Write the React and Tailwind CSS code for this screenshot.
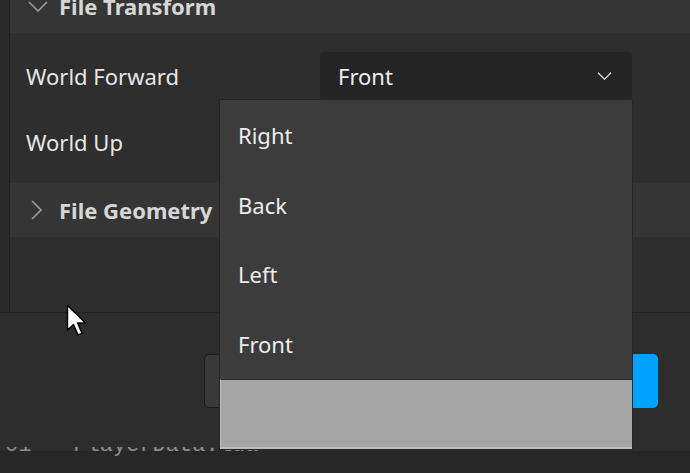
import React from "react";

const ChevronDown = ({ className = "" }) => (
  <svg viewBox="0 0 20 11" className={className} fill="none" stroke="currentColor" strokeWidth="1.6">
    <path d="M1 1l9 9 9-9" />
  </svg>
);

const ChevronRight = ({ className = "" }) => (
  <svg viewBox="0 0 11 20" className={className} fill="none" stroke="currentColor" strokeWidth="1.6">
    <path d="M1 1l9 9-9 9" />
  </svg>
);

const SectionHeader = ({ title, open, className = "" }) => (
  <div className={`h-[54px] flex items-center bg-[#353535] ${className}`}>
    {open ? (
      <>
        <ChevronDown className="w-[20px] h-[11px] ml-[18px] text-[#9a9a9a]" />
        <span className="ml-[11px] text-[22px] font-bold text-[#d6d6d6]">{title}</span>
      </>
    ) : (
      <>
        <ChevronRight className="w-[11px] h-[20px] ml-[21px] text-[#9a9a9a]" />
        <span className="ml-[17px] text-[22px] font-bold text-[#d6d6d6]">{title}</span>
      </>
    )}
  </div>
);

const Row = ({ label, children }) => (
  <div className="h-[66px] flex items-center">
    <div className="w-[310px] pl-[16px] text-[22px] text-[#e6e6e6]">{label}</div>
    {children}
  </div>
);

const options = ["Right", "Back", "Left", "Front"];

export default function App() {
  return (
    <div
      className="relative w-[690px] h-[473px] overflow-hidden bg-[#2e2e2e] flex flex-col"
      style={{ fontFamily: '"Noto Sans", "Open Sans", sans-serif' }}
    >
      {/* properties panel */}
      <div className="h-[313px] flex border-b border-[#222]">
        <div className="w-[10px] bg-[#2a2a2a] border-r border-[#222] shrink-0" />
        <div className="flex-1 flex flex-col bg-[#2e2e2e]">
          <SectionHeader title="File Transform" open className="-mt-[21px]" />
          <div className="pt-[10px] pb-[8px]">
            <Row label="World Forward">
              <div className="w-[312px] h-[48px] rounded-[4px] bg-[#252525] flex items-center justify-between pl-[18px] pr-[20px] text-[22px] text-[#eeeeee]">
                <span>Front</span>
                <ChevronDown className="w-[15px] h-[8px] text-[#e0e0e0]" />
              </div>
            </Row>
            <Row label="World Up" />
          </div>
          <SectionHeader title="File Geometry" />
        </div>
      </div>

      {/* dialog footer */}
      <div className="h-[134px] bg-[#2d2d2d] flex items-start pt-[41px]">
        <div className="ml-[204px] w-[120px] h-[54px] rounded-[5px] border border-[#1c1c1c] bg-[#393939]" />
        <div className="ml-[250px] w-[84px] h-[54px] rounded-[5px] bg-[#00a2ff]" />
      </div>

      {/* script list below */}
      <div className="flex-1 bg-[linear-gradient(#2d2d2d_0_4px,#272727_4px)] overflow-hidden">
        <div
          className="-mt-[18px] flex text-[22px] text-[#8d8d8d]"
          style={{ fontFamily: '"Liberation Mono", "DejaVu Sans Mono", monospace' }}
        >
          <span className="ml-[5px]">01</span>
          <span className="ml-[42px]">PlayerData.lua</span>
        </div>
      </div>

      {/* open dropdown */}
      <div className="absolute left-[219px] top-[99px] w-[414px] h-[351px] bg-[#3c3c3c] border border-[#252525] flex flex-col">
        <div className="pt-[1px]">
          {options.map((o) => (
            <div key={o} className="h-[69.5px] flex items-center pl-[18px] text-[22px] text-[#ececec]">
              {o}
            </div>
          ))}
        </div>
        <div className="flex-1 bg-[#a5a5a5] border-t border-t-[#2a2a2a] border-l border-l-[#bdbdbd] border-b-2 border-b-[#bdbdbd]" />
      </div>

      {/* mouse cursor */}
      <svg className="absolute left-[66px] top-[304px]" width="24" height="34" viewBox="0 0 24 34">
        <path d="M1.5 1.5 L1.5 26 L7.5 20.5 L12 31 L16 29.3 L11.6 19 L19.5 19 Z" fill="#fff" stroke="#000" strokeWidth="1.4" strokeLinejoin="round" />
      </svg>
    </div>
  );
}
